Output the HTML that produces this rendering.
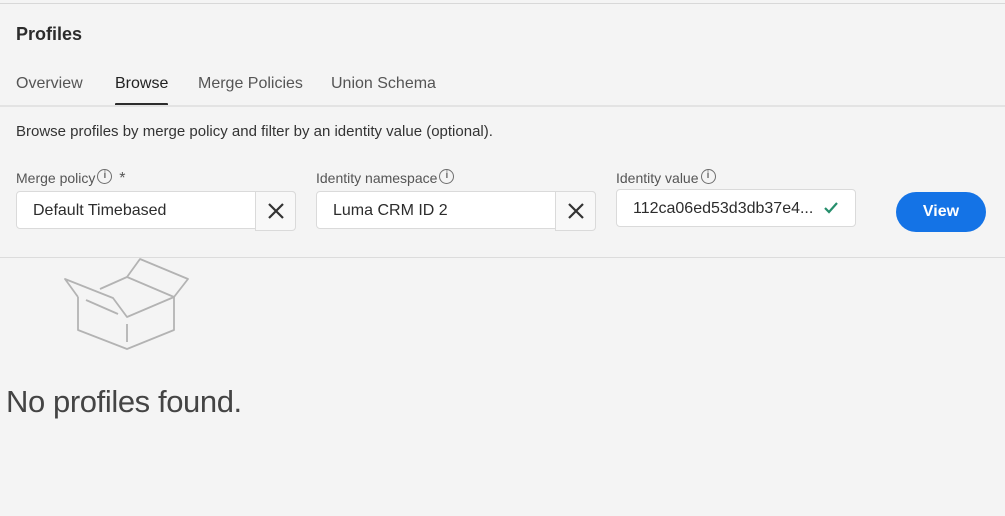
<!DOCTYPE html><html><head><style>
body{margin:0;width:1005px;height:516px;background:#f4f4f4;font-family:"Liberation Sans",sans-serif;position:relative;overflow:hidden;color:#2c2c2c}
.a{position:absolute;white-space:nowrap}
.box{position:absolute;background:#fff;border:1px solid #dadada;border-radius:4px;height:38px;box-sizing:border-box}
.x{position:absolute;right:-1px;top:-1px;width:41px;height:40px;box-sizing:border-box;background:#f8f8f8;border-radius:0 4px 4px 0;border:1px solid #dadada}
.lbl{font-size:14px;color:#555;line-height:16px}
.i{position:relative;top:-1px;display:inline-block;width:15px;height:15px;border:1.5px solid #6e6e6e;border-radius:50%;box-sizing:border-box;font-size:10px;line-height:12px;text-align:center;color:#6e6e6e;font-weight:bold;vertical-align:top;margin-left:2px}
</style></head><body>
<div class="a" style="left:0;top:3px;width:1005px;height:1px;background:#d8d8d8"></div>
<div class="a" style="left:16px;top:24px;font-size:18px;font-weight:bold;color:#2c2c2c">Profiles</div>
<div class="a" style="left:16px;top:75px;font-size:16px;color:#555">Overview</div>
<div class="a" style="left:115px;top:75px;font-size:16px;color:#222">Browse</div>
<div class="a" style="left:115px;top:103px;width:53px;height:3px;background:#2c2c2c;border-radius:1px"></div>
<div class="a" style="left:198px;top:75px;font-size:16px;color:#555">Merge Policies</div>
<div class="a" style="left:331px;top:75px;font-size:16px;color:#555">Union Schema</div>
<div class="a" style="left:0;top:105px;width:1005px;height:2px;background:#e3e3e3"></div>
<div class="a" style="left:16px;top:123px;font-size:15px;color:#333">Browse profiles by merge policy and filter by an identity value (optional).</div>
<div class="a lbl" style="left:16px;top:170px">Merge policy<span class="i">i</span> <span style="font-size:16px;margin-left:3px">*</span></div>
<div class="a lbl" style="left:316px;top:170px">Identity namespace<span class="i">i</span></div>
<div class="a lbl" style="left:616px;top:170px">Identity value<span class="i">i</span></div>
<div class="box" style="left:16px;top:191px;width:280px"><span class="a" style="left:16px;top:10px;font-size:16px">Default Timebased</span><div class="x"><svg width="40" height="38" viewBox="0 0 40 38"><path d="M13 12L27 26M27 12L13 26" stroke="#333" stroke-width="2.2"/></svg></div></div>
<div class="box" style="left:316px;top:191px;width:280px"><span class="a" style="left:16px;top:10px;font-size:16px">Luma CRM ID 2</span><div class="x"><svg width="40" height="38" viewBox="0 0 40 38"><path d="M13 12L27 26M27 12L13 26" stroke="#333" stroke-width="2.2"/></svg></div></div>
<div class="box" style="left:616px;top:189px;width:240px"><span class="a" style="left:16px;top:10px;font-size:16px">112ca06ed53d3db37e4...</span><svg class="a" style="left:206px;top:11px" width="16" height="14"><path d="M2 7L6 11L14 2" stroke="#268e6c" stroke-width="2.2" fill="none"/></svg></div>
<div class="a" style="left:896px;top:192px;width:90px;height:40px;border-radius:20px;background:#1473e6;color:#fff;font-weight:bold;font-size:16px;text-align:center;line-height:40px">View</div>
<div class="a" style="left:0;top:257px;width:1005px;height:1px;background:#dcdcdc"></div>
<svg class="a" style="left:0;top:250px" width="200" height="110" viewBox="0 250 200 110"><g fill="none" stroke="#b3b3b3" stroke-width="1.8" stroke-linejoin="round"><path d="M78 297L65 279L113 298L127 317L174 297L188 279L140 259L127 277L174 297"/><path d="M127 277L100 289"/><path d="M78 297V330L127 349L174 330V297"/><path d="M127 324V342"/><path d="M86 300L118 314"/></g></svg>
<div class="a" style="left:6px;top:384px;font-size:31px;color:#444;letter-spacing:-0.4px">No profiles found.</div>
</body></html>
